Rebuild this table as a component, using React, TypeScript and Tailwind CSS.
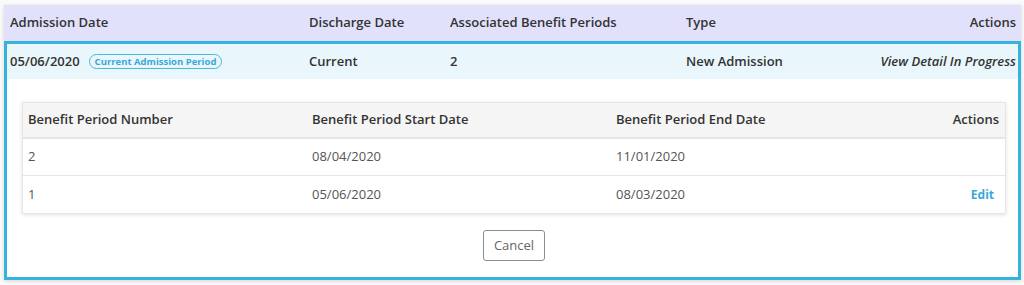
export default function App() {
  const periods = [
    { num: "2", start: "08/04/2020", end: "11/01/2020", edit: false },
    { num: "1", start: "05/06/2020", end: "08/03/2020", edit: true },
  ];

  return (
    <div
      className="h-[285px] w-[1024px] bg-[#fafafa] pt-[5px] text-[#333]"
      style={{ fontFamily: '"Open Sans", "Liberation Sans", sans-serif' }}
    >
      <div className="ml-[4px] w-[1017px] bg-white shadow-[0_1px_4px_rgba(0,0,0,0.15)]">
        {/* Header */}
        <div className="grid h-[36px] grid-cols-[299px_141px_236px_1fr_auto] items-center bg-[#e1e1fb] pl-[6px] pr-[5px] text-[13px] font-semibold">
          <div>Admission Date</div>
          <div>Discharge Date</div>
          <div>Associated Benefit Periods</div>
          <div>Type</div>
          <div className="text-right">Actions</div>
        </div>

        {/* Expanded row */}
        <div className="border-[3px] border-[#36b3dc]">
          <div className="grid h-[35px] grid-cols-[299px_141px_236px_1fr_auto] items-center bg-[#e9f7fc] pl-[3px] pr-[2px] text-[13px] font-semibold">
            <div className="flex items-center">
              <span>05/06/2020</span>
              <span className="ml-[9px] rounded-full border border-[#4bb8de] px-[5px] text-[9.5px] leading-[13px] font-bold text-[#3aa9d6]">
                Current Admission Period
              </span>
            </div>
            <div>Current</div>
            <div>2</div>
            <div>New Admission</div>
            <div className="text-right italic">View Detail In Progress</div>
          </div>

          <div className="px-[12px] pt-[23px] pb-[16px] pl-[15px]">
            <div className="border border-[#e6e6e6] shadow-[0_1px_4px_rgba(0,0,0,0.12)]">
              <div className="grid h-[36px] grid-cols-[284px_304px_1fr_auto] items-center border-b-2 border-[#e3e6ea] bg-[#f5f5f5] pl-[5px] pr-[6px] text-[13px] font-semibold">
                <div>Benefit Period Number</div>
                <div>Benefit Period Start Date</div>
                <div>Benefit Period End Date</div>
                <div className="text-right">Actions</div>
              </div>
              {periods.map((p, i) => (
                <div
                  key={p.num}
                  className={`grid h-[37px] grid-cols-[284px_304px_1fr_auto] items-center pl-[5px] pr-[6px] text-[13px] text-[#555] ${
                    i === 0 ? "border-b border-[#e3e6ea]" : ""
                  }`}
                >
                  <div>{p.num}</div>
                  <div>{p.start}</div>
                  <div>{p.end}</div>
                  <div className="pr-[5px] text-right">
                    {p.edit && <span className="text-[12px] font-bold text-[#3aa9d6]">Edit</span>}
                  </div>
                </div>
              ))}
            </div>

            <div className="mt-[16px] flex justify-center">
              <button className="h-[31px] w-[62px] rounded-[3px] border border-[#8a8f96] bg-white text-[13px] text-[#666]">
                Cancel
              </button>
            </div>
          </div>
        </div>
      </div>
    </div>
  );
}
